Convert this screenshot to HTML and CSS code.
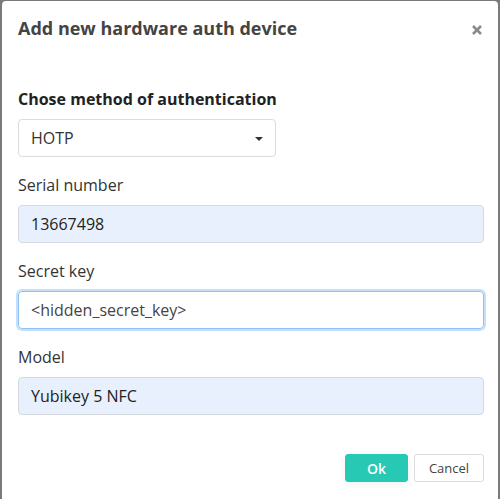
FILE: index.html
```html
<!DOCTYPE html>
<html>
<head>
<meta charset="utf-8">
<link rel="stylesheet" href="styles.css">
</head>
<body>
<div class="dialog">
  <div class="header">
    <h1 class="title">Add new hardware auth device</h1>
    <span class="close" aria-label="Close">
      <svg width="12" height="12" viewBox="0 0 12 12"><path d="M2 2 L10 10 M10 2 L2 10" stroke="#8a8a8a" stroke-width="2.6" stroke-linecap="butt"/></svg>
    </span>
  </div>
  <div class="body">
    <div class="group first">
      <div class="label strong">Chose method of authentication</div>
      <div class="select">
        <span>HOTP</span>
        <span class="caret"></span>
      </div>
    </div>
    <div class="group">
      <div class="label">Serial number</div>
      <div class="input autofill">13667498</div>
    </div>
    <div class="group">
      <div class="label">Secret key</div>
      <div class="input focus">&lt;hidden_secret_key&gt;</div>
    </div>
    <div class="group">
      <div class="label">Model</div>
      <div class="input autofill">Yubikey 5 NFC</div>
    </div>
  </div>
  <div class="footer">
    <button class="btn primary">Ok</button>
    <button class="btn">Cancel</button>
  </div>
</div>
</body>
</html>
```
FILE: styles.css
```css
html, body {
  margin: 0;
  padding: 0;
}
body {
  background: #7a7a7a;
  width: 500px;
  height: 499px;
  overflow: hidden;
  font-family: "Open Sans", "Noto Sans", sans-serif;
}
.dialog {
  margin: 1px 0 0 2px;
  width: 496px;
  height: 520px;
  background: #fff;
  border-radius: 4px;
  box-sizing: border-box;
}
.header {
  display: flex;
  align-items: center;
  justify-content: space-between;
  padding: 15px 15px 0 16px;
  height: 25px;
}
.title {
  margin: 0;
  font-size: 18px;
  line-height: 25px;
  font-weight: 700;
  color: #444;
}
.close {
  display: flex;
  width: 12px;
  height: 12px;
  margin-top: 3px;
}
.body {
  padding: 0 14px 0 16px;
  display: flex;
  flex-direction: column;
  gap: 18px;
}
.group.first {
  margin-top: 48px;
}
.label {
  font-size: 16px;
  line-height: 21px;
  color: #333;
  margin-bottom: 9px;
}
.label.strong {
  font-weight: 700;
  color: #222;
}
.select {
  width: 258px;
  height: 38px;
  box-sizing: border-box;
  border: 1px solid #dcdcdc;
  border-radius: 4px;
  display: flex;
  align-items: center;
  justify-content: space-between;
  padding: 0 12px 0 12px;
  font-size: 16px;
  color: #333;
}
.caret {
  width: 0;
  height: 0;
  border-left: 4px solid transparent;
  border-right: 4px solid transparent;
  border-top: 4px solid #333;
  margin-top: 1px;
}
.input {
  height: 38px;
  box-sizing: border-box;
  border: 1px solid #d5d9e0;
  border-radius: 4px;
  display: flex;
  align-items: center;
  padding: 0 12px;
  font-size: 16px;
  color: #222;
}
.input.autofill {
  background: #e8f0fe;
}
.input.focus {
  border-color: #8ec2f5;
  box-shadow: 0 0 0 2px #c6e0fb;
  color: #444;
}
.footer {
  display: flex;
  justify-content: flex-end;
  gap: 6px;
  padding: 39px 14px 0 0;
}
.btn {
  height: 28px;
  box-sizing: border-box;
  border: 1px solid #dcdcdc;
  border-radius: 3px;
  background: #fff;
  font-family: "Open Sans", "Noto Sans", sans-serif;
  font-size: 13px;
  color: #444;
  padding: 0 8px;
  width: 70px;
}
.btn.primary {
  background: #27c9b4;
  border-color: #27c9b4;
  color: #fff;
  font-weight: 600;
  width: 63px;
  font-size: 14px;
  box-shadow: 0 2px 8px rgba(0,0,0,0.06);
}
```
